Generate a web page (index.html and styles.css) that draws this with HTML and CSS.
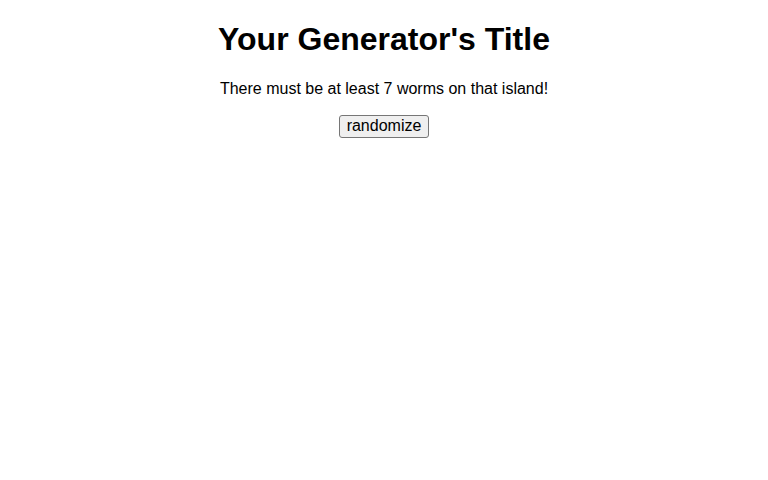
FILE: index.html
```html
<!DOCTYPE html>
<html>
<head>
<meta charset="utf-8">
<link rel="stylesheet" href="styles.css">
</head>
<body>
<main class="page">
  <h1 class="title">Your Generator's Title</h1>
  <p class="output">There must be at least 7 worms on that island!</p>
  <button class="randomize">randomize</button>
</main>
</body>
</html>
```
FILE: styles.css
```css
body {
  margin: 0;
  font-family: "Liberation Sans", Arial, sans-serif;
  color: #000;
  background: #fff;
}
.page {
  text-align: center;
}
.title {
  font-size: 32px;
  font-weight: bold;
  margin: 21.44px 0;
}
.output {
  font-size: 16px;
  margin: 16px 0;
}
.randomize {
  font-family: "Liberation Sans", Arial, sans-serif;
  font-size: 16px;
  color: #000;
  background: #efefef;
  border: 1px solid #767676;
  border-radius: 3px;
  padding: 1px 7px;
  height: 23px;
  margin-top: 1px;
}
```
